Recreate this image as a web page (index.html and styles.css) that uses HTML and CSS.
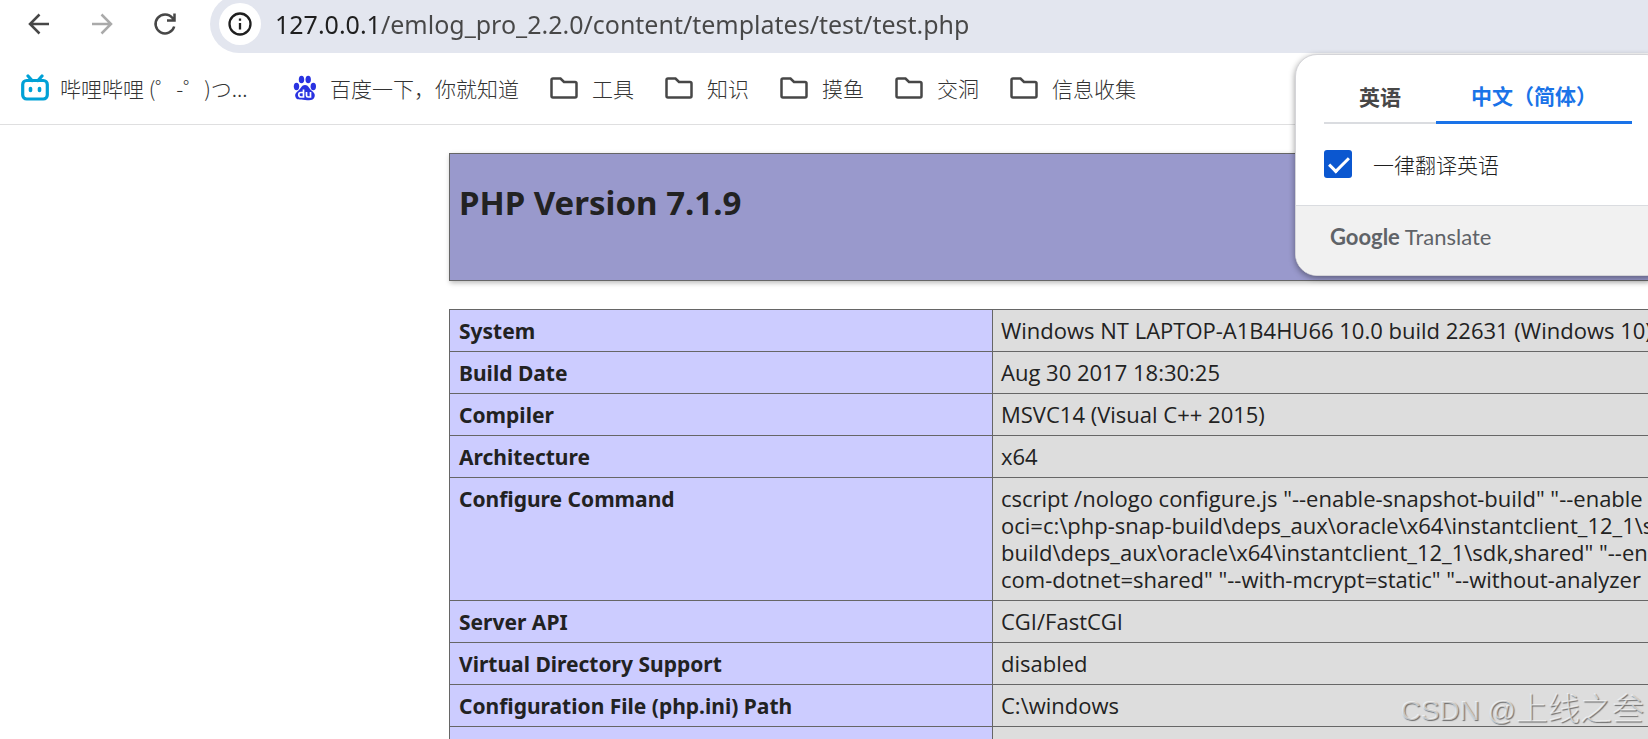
FILE: index.html
```html
<!DOCTYPE html>
<html lang="zh-CN">
<head>
  <meta charset="UTF-8">
  <meta name="viewport" content="width=device-width, initial-scale=1.0">
  <title>phpinfo()</title>
  <link rel="stylesheet" href="styles.css">
</head>
<body>

<header class="browser">
  <div class="toolbar">
    <button class="nav-button" aria-label="Back">
      <svg viewBox="0 0 24 24"><path d="M22 12H3M12.500 2.500L3 12l9.500 9.500"/></svg>
    </button>
    <button class="nav-button" aria-label="Forward" disabled>
      <svg viewBox="0 0 24 24"><path d="M2 12h19M11.500 2.500L21 12l-9.500 9.500"/></svg>
    </button>
    <button class="nav-button" aria-label="Reload">
      <svg viewBox="0 0 24 24"><path d="M21.200 14.500A9.500 9.500 0 1 1 19.500 6L21 8M21.500 1.500V8.500H14"/></svg>
    </button>
    <div class="omnibox">
      <button class="site-info" aria-label="Site information">
        <svg viewBox="0 0 24 24"><circle cx="12" cy="12" r="10.500"/><path d="M12 11v6.500M12 6.500v2.200"/></svg>
      </button>
      <input class="url" type="text" aria-label="Address" value="127.0.0.1/emlog_pro_2.2.0/content/templates/test/test.php">
    </div>
  </div>

  <nav class="bookmarks">
    <a class="bookmark bookmark-wide" href="#">
      <svg viewBox="0 0 28 28"><path d="M7 2l4 4.500M21 2l-4 4.500" stroke="#00a1d6" stroke-width="3.200" stroke-linecap="round"/><rect x="1.700" y="6.500" width="24.600" height="18.500" rx="4" fill="none" stroke="#00a1d6" stroke-width="3.200"/><path d="M9.500 14.500v2M18.500 14.500v2" stroke="#00a1d6" stroke-width="3.600" stroke-linecap="round"/></svg>
      <span>哔哩哔哩 (゜-゜)つ...</span>
    </a>
    <a class="bookmark" href="#">
      <svg viewBox="0 0 28 28" fill="#2932e1"><ellipse cx="5.500" cy="12.500" rx="2.700" ry="3.700"/><ellipse cx="10.500" cy="5.500" rx="2.700" ry="3.800"/><ellipse cx="17.200" cy="5.500" rx="2.700" ry="3.800"/><ellipse cx="22.300" cy="12.500" rx="2.700" ry="3.700"/><path d="M14 11c3.500 0 4 3.500 6.500 5.500s4 3.500 3 6.500c-1 3.500-4 3.500-9.500 3s-8.500 0-9.500-3c-1-3 .5-4.500 3-6.500S10.500 11 14 11z"/><path d="M12.500 15.500v7.500h-2.500a2.200 2.200 0 0 1 0-4.500h2.500M15.500 18v3.500c0 1 .5 1.500 1.500 1.500h2.500v-5" fill="none" stroke="#fff" stroke-width="1.700"/></svg>
      <span>百度一下，你就知道</span>
    </a>
    <a class="bookmark folder" href="#">
      <svg viewBox="0 0 28 28"><path d="M3.500 4.500h7l3.500 3.500h11q1.500 0 1.500 1.500v12.500q0 1.500-1.500 1.500h-22q-1.500 0-1.500-1.500v-16q0-1.500 1.500-1.500z"/></svg>
      <span>工具</span>
    </a>
    <a class="bookmark folder" href="#">
      <svg viewBox="0 0 28 28"><path d="M3.500 4.500h7l3.500 3.500h11q1.500 0 1.500 1.500v12.500q0 1.500-1.500 1.500h-22q-1.500 0-1.500-1.500v-16q0-1.500 1.500-1.500z"/></svg>
      <span>知识</span>
    </a>
    <a class="bookmark folder" href="#">
      <svg viewBox="0 0 28 28"><path d="M3.500 4.500h7l3.500 3.500h11q1.500 0 1.500 1.500v12.500q0 1.500-1.500 1.500h-22q-1.500 0-1.500-1.500v-16q0-1.500 1.500-1.500z"/></svg>
      <span>摸鱼</span>
    </a>
    <a class="bookmark folder" href="#">
      <svg viewBox="0 0 28 28"><path d="M3.500 4.500h7l3.500 3.500h11q1.500 0 1.500 1.500v12.500q0 1.500-1.500 1.500h-22q-1.500 0-1.500-1.500v-16q0-1.500 1.500-1.500z"/></svg>
      <span>交洞</span>
    </a>
    <a class="bookmark folder" href="#">
      <svg viewBox="0 0 28 28"><path d="M3.500 4.500h7l3.500 3.500h11q1.500 0 1.500 1.500v12.500q0 1.500-1.500 1.500h-22q-1.500 0-1.500-1.500v-16q0-1.500 1.500-1.500z"/></svg>
      <span>信息收集</span>
    </a>
  </nav>
</header>

<main class="phpinfo">
  <div class="version">
    <h1>PHP Version 7.1.9</h1>
  </div>

  <table class="info">
    <tr><th scope="row">System</th><td>Windows NT LAPTOP-A1B4HU66 10.0 build 22631 (Windows 10)</td></tr>
    <tr><th scope="row">Build Date</th><td>Aug 30 2017 18:30:25</td></tr>
    <tr><th scope="row">Compiler</th><td>MSVC14 (Visual C++ 2015)</td></tr>
    <tr><th scope="row">Architecture</th><td>x64</td></tr>
    <tr><th scope="row">Configure Command</th><td>cscript /nologo configure.js "--enable-snapshot-build" "--enable<br>oci=c:\php-snap-build\deps_aux\oracle\x64\instantclient_12_1\s<br>build\deps_aux\oracle\x64\instantclient_12_1\sdk,shared" "--ena<br>com-dotnet=shared" "--with-mcrypt=static" "--without-analyzer</td></tr>
    <tr><th scope="row">Server API</th><td>CGI/FastCGI</td></tr>
    <tr><th scope="row">Virtual Directory Support</th><td>disabled</td></tr>
    <tr><th scope="row">Configuration File (php.ini) Path</th><td>C:\windows</td></tr>
    <tr><th scope="row">&nbsp;</th><td></td></tr>
  </table>
</main>

<section class="translate">
  <div class="tabs">
    <button class="tab">英语</button>
    <button class="tab active">中文（简体）</button>
  </div>
  <div class="always">
    <input type="checkbox" id="always-translate" checked>
    <label for="always-translate">一律翻译英语</label>
  </div>
  <div class="brand"><b>Google</b> Translate</div>
</section>

<div class="watermark"><span>CSDN @</span>上线之叁</div>

</body>
</html>
```
FILE: styles.css
```css
* {
  box-sizing: border-box;
}

body {
  margin: 0;
  height: 100vh;
  position: relative;
  overflow: hidden;
  background: #fff;
  color: #222;
  font-family: "Noto Sans", "Noto Sans CJK SC", sans-serif;
}

button {
  border: 0;
  padding: 0;
  background: none;
  font-family: inherit;
}

/* Browser bars */
.browser {
  border-bottom: 1px solid #dfdfe0;
}

.toolbar {
  display: flex;
  align-items: center;
  gap: 39px;
  height: 53px;
  padding-left: 27px;
  padding-bottom: 6px;
}

.nav-button {
  width: 24px;
  height: 24px;
}

.nav-button svg {
  display: block;
  fill: none;
  stroke: #474747;
  stroke-width: 2.5;
}

.nav-button:disabled svg {
  stroke: #aaa;
}

.omnibox {
  display: flex;
  flex: 1;
  align-items: center;
  gap: 14px;
  height: 58px;
  margin-left: -6px;
  padding-left: 9px;
  border-radius: 29px 0 0 29px;
  background: #e3e6ef;
}

.site-info {
  display: flex;
  align-items: center;
  justify-content: center;
  width: 42px;
  height: 42px;
  border-radius: 50%;
  background: #fff;
}

.site-info svg {
  width: 24px;
  fill: none;
  stroke: #1f1f1f;
  stroke-width: 2.3;
}

.url {
  flex: 1;
  border: 0;
  padding: 0;
  outline: none;
  font-family: "Noto Sans", sans-serif;
  font-size: 25px;
  line-height: 36px;
  color: transparent;
  /* host is darker than the path */
  background: linear-gradient(to right, #1f1f1f 102px, #474747 102px);
  -webkit-background-clip: text;
  background-clip: text;
}

.bookmarks {
  display: flex;
  align-items: center;
  gap: 31px;
  height: 71px;
  padding-left: 21px;
  padding-bottom: 2px;
}

.bookmark {
  display: flex;
  align-items: center;
  gap: 11px;
  color: #333;
  font-size: 21px;
  font-weight: 300;
  font-family: "Noto Sans CJK SC", sans-serif;
  line-height: 30px;
  text-decoration: none;
  white-space: nowrap;
}

.bookmark svg {
  width: 28px;
  height: 28px;
}

.bookmark-wide {
  width: 239px;
}

.folder {
  gap: 14px;
}

.folder svg {
  fill: none;
  stroke: #474747;
  stroke-width: 2.5;
}

/* phpinfo page */
.phpinfo {
  padding: 28px 0 0 449px;
}

.version {
  height: 128px;
  margin-right: -1px;
  padding: 25px 9px;
  border: 1px solid #666;
  background: #99c;
  box-shadow: 1px 2px 5px #bbb;
}

.version h1 {
  margin: 0;
  font-size: 33px;
  line-height: 48px;
}

.info {
  width: calc(100% + 1px);
  margin-top: 28px;
  border-collapse: collapse;
  table-layout: fixed;
}

.info th,
.info td {
  padding: 8px 9px 6px;
  border: 1px solid #666;
  font-size: 21px;
  line-height: 27px;
  text-align: left;
  vertical-align: top;
  white-space: nowrap;
}

.info th {
  width: 543px;
  background: #ccf;
}

.info td {
  padding: 7px 8px;
  background: #ddd;
  font-family: "Open Sans", sans-serif;
  font-size: 22px;
}

/* Translate popup */
.translate {
  position: absolute;
  top: 54px;
  left: 1295px;
  right: -20px;
  overflow: hidden;
  border: 1px solid #d4d4d8;
  border-radius: 22px;
  background: #fff;
  box-shadow: 0 2px 6px rgba(0, 0, 0, 0.4);
}

.tabs {
  display: flex;
  padding: 17px 28px 0;
}

.tab {
  padding: 9px 35px 12px;
  border-bottom: 2px solid #dadce0;
  color: #474747;
  font-size: 21px;
  font-weight: 700;
  line-height: 28px;
  font-family: "Noto Sans CJK SC", sans-serif;
}

.tab.active {
  border-bottom: 3px solid #1a73e8;
  color: #1a73e8;
}

.always {
  display: flex;
  align-items: center;
  gap: 21px;
  height: 81px;
  padding: 0 28px 2px;
  color: #1f1f1f;
  font-size: 21px;
  font-weight: 300;
  font-family: "Noto Sans CJK SC", sans-serif;
}

.always input {
  appearance: none;
  width: 28px;
  height: 28px;
  margin: 0;
  border-radius: 3px;
}

.always input:checked {
  background: #0b57d0;
}

.always input:checked::before {
  content: "";
  display: block;
  width: 17px;
  height: 8px;
  margin: 7px 5px;
  border-left: 3px solid #fff;
  border-bottom: 3px solid #fff;
  transform: rotate(-45deg);
}

.brand {
  height: 70px;
  padding-left: 34px;
  border-top: 1px solid #dadce0;
  background: #f1f1f1;
  color: #5f6368;
  font-family: Lato, sans-serif;
  font-size: 22px;
  line-height: 62px;
}

.watermark {
  position: absolute;
  right: 4px;
  bottom: 8px;
  color: rgba(255, 255, 255, 0.6);
  font-size: 32px;
  font-weight: 300;
  line-height: 40px;
  font-family: "Noto Sans CJK SC", sans-serif;
  text-shadow: 1px 1px 1px rgba(0, 0, 0, 0.5);
}

.watermark span {
  font-family: "Liberation Sans", sans-serif;
  font-size: 28px;
}
```
